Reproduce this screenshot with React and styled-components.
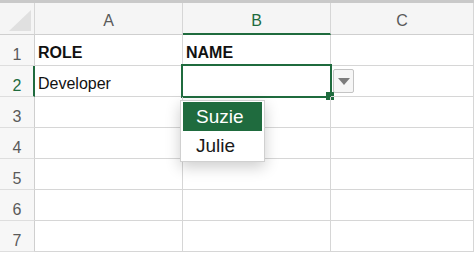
import React from 'react';
import styled, { createGlobalStyle } from 'styled-components';

const GlobalStyle = createGlobalStyle`
  html, body {
    margin: 0;
    padding: 0;
    background: #ffffff;
  }
  body {
    font-family: "Liberation Sans", Arial, sans-serif;
  }
`;

const green = '#1f6b3e';

const Sheet = styled.div`
  width: 474px;
  height: 254px;
  overflow: hidden;
  border-top: 3px solid #c9c9c9;
  box-sizing: border-box;
`;

const Grid = styled.div`
  display: grid;
  grid-template-columns: 35px 148px 148px 143px;
  grid-template-rows: 32px repeat(7, 31px);
`;

const Cell = styled.div`
  position: relative;
  box-sizing: border-box;
  border-right: 1px solid #d6d6d6;
  border-bottom: 1px solid #d6d6d6;
  display: flex;
  align-items: center;
  padding: 5px 3px 0;
  font-size: 16px;
  color: #111;
  font-weight: ${p => (p.$bold ? 700 : 400)};
`;

const ColHead = styled.div`
  box-sizing: border-box;
  background: #f5f5f5;
  border-right: 1px solid #d6d6d6;
  border-bottom: ${p => (p.$active ? `2px solid ${green}` : '1px solid #cfcfcf')};
  display: flex;
  align-items: center;
  justify-content: center;
  font-size: 16px;
  color: ${p => (p.$active ? green : '#5a5a5a')};
  padding-top: ${p => (p.$active ? '5px' : '4px')};
`;

const Corner = styled(ColHead)`
  position: relative;
  border-bottom: 1px solid #cfcfcf;
  &::after {
    content: '';
    position: absolute;
    right: 3px;
    bottom: 3px;
    width: 0;
    height: 0;
    border-left: 22px solid transparent;
    border-bottom: 21px solid #e0e0e0;
  }
`;

const RowHead = styled.div`
  box-sizing: border-box;
  background: #f7f7f7;
  border-right: ${p => (p.$active ? `2px solid ${green}` : '1px solid #cfcfcf')};
  border-bottom: 1px solid #dedede;
  display: flex;
  align-items: center;
  justify-content: center;
  font-size: 16px;
  color: ${p => (p.$active ? green : '#5a5a5a')};
  padding-top: 9px;
  padding-left: ${p => (p.$active ? '1px' : '0')};
`;

const Selection = styled.div`
  position: absolute;
  top: -2px;
  left: -2px;
  right: -2px;
  bottom: -2px;
  border: 2px solid ${green};
  pointer-events: none;
`;

const FillHandle = styled.div`
  position: absolute;
  right: -4px;
  bottom: -4px;
  width: 8px;
  height: 8px;
  background: ${green};
`;

const DropButton = styled.div`
  position: absolute;
  left: calc(100% + 3px);
  top: 3px;
  width: 21px;
  height: 24px;
  box-sizing: border-box;
  background: #f6f6f6;
  border: 1px solid #c4c4c4;
  border-radius: 2px;
  display: flex;
  align-items: center;
  justify-content: center;
  z-index: 2;
`;

const Triangle = styled.div`
  width: 0;
  height: 0;
  border-left: 6px solid transparent;
  border-right: 6px solid transparent;
  border-top: 7px solid #7d7d7d;
`;

const List = styled.ul`
  position: absolute;
  top: 34px;
  left: -3px;
  width: 85px;
  margin: 0;
  padding: 1px 2px 2px;
  list-style: none;
  background: #fff;
  box-sizing: border-box;
  border: 1px solid #d0d0d0;
  box-shadow: 0 5px 14px rgba(0, 0, 0, 0.2);
  z-index: 3;
`;

const Option = styled.li`
  height: ${p => (p.$selected ? '29px' : '28px')};
  display: flex;
  align-items: center;
  padding-left: 13px;
  padding-top: 1px;
  box-sizing: border-box;
  font-family: "Liberation Sans", Arial, sans-serif;
  font-size: 19px;
  color: ${p => (p.$selected ? '#ffffff' : '#1a1a1a')};
  background: ${p => (p.$selected ? green : 'transparent')};
`;

const rows = [
  { n: 1, a: 'ROLE', b: 'NAME', bold: true },
  { n: 2, a: 'Developer', b: '', active: true },
  { n: 3 }, { n: 4 }, { n: 5 }, { n: 6 }, { n: 7 },
];

const App = () => (
  <>
    <GlobalStyle />
    <Sheet>
      <Grid>
        <Corner />
        <ColHead>A</ColHead>
        <ColHead $active>B</ColHead>
        <ColHead>C</ColHead>
        {rows.map(r => (
          <React.Fragment key={r.n}>
            <RowHead $active={r.active}>{r.n}</RowHead>
            <Cell $bold={r.bold}>{r.a}</Cell>
            <Cell $bold={r.bold}>
              {r.b}
              {r.active && (
                <>
                  <Selection>
                    <FillHandle />
                  </Selection>
                  <DropButton><Triangle /></DropButton>
                  <List>
                    <Option $selected>Suzie</Option>
                    <Option>Julie</Option>
                  </List>
                </>
              )}
            </Cell>
            <Cell />
          </React.Fragment>
        ))}
      </Grid>
    </Sheet>
  </>
);

export default App;
